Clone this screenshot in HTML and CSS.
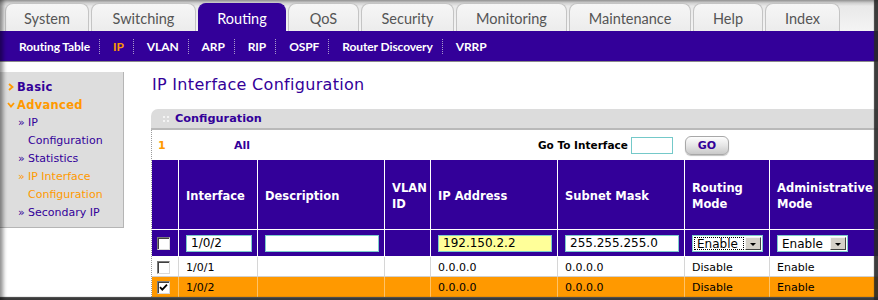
FILE: index.html
```html
<!DOCTYPE html>
<html>
<head>
<meta charset="utf-8">
<link rel="stylesheet" href="styles.css">
</head>
<body>
<div class="window">
  <div class="tabs">
    <div class="tab">System</div>
    <div class="tab">Switching</div>
    <div class="tab active">Routing</div>
    <div class="tab">QoS</div>
    <div class="tab">Security</div>
    <div class="tab">Monitoring</div>
    <div class="tab">Maintenance</div>
    <div class="tab">Help</div>
    <div class="tab">Index</div>
  </div>
  <div class="subnav">
    <span class="sn">Routing Table</span><span class="sep"></span>
    <span class="sn on">IP</span><span class="sep"></span>
    <span class="sn">VLAN</span><span class="sep"></span>
    <span class="sn">ARP</span><span class="sep"></span>
    <span class="sn">RIP</span><span class="sep"></span>
    <span class="sn">OSPF</span><span class="sep"></span>
    <span class="sn">Router Discovery</span><span class="sep"></span>
    <span class="sn">VRRP</span>
  </div>
  <div class="layout">
    <nav class="side">
      <div class="top-item"><span class="mk"><svg viewBox="0 0 6 8" width="6" height="8"><path d="M1 1 L4.5 4 L1 7" fill="none" stroke="#ff9900" stroke-width="1.8"/></svg></span>Basic</div>
      <div class="top-item open"><span class="mk"><svg viewBox="0 0 8 6" width="8" height="6"><path d="M1 1 L4 4.5 L7 1" fill="none" stroke="#ff9900" stroke-width="1.8"/></svg></span>Advanced</div>
      <div class="sub-item"><span class="mk2">&raquo;</span><span class="txt">IP Configuration</span></div>
      <div class="sub-item"><span class="mk2">&raquo;</span><span class="txt">Statistics</span></div>
      <div class="sub-item cur"><span class="mk2">&raquo;</span><span class="txt">IP Interface Configuration</span></div>
      <div class="sub-item"><span class="mk2">&raquo;</span><span class="txt">Secondary IP</span></div>
    </nav>
    <main class="content">
      <h1 class="title">IP Interface Configuration</h1>
      <section class="panel">
        <div class="panel-head"><span class="grip"><i></i><i></i><i></i><i></i></span>Configuration</div>
        <div class="panel-body">
          <div class="toolbar">
            <span class="page">1</span>
            <span class="all">All</span>
            <span class="goto">Go To Interface</span>
            <span class="goto-input"></span>
            <span class="go-btn">GO</span>
          </div>
          <table class="grid">
            <colgroup>
              <col class="c-chk"><col class="c-if"><col class="c-desc"><col class="c-vlan"><col class="c-ip"><col class="c-mask"><col class="c-rm"><col class="c-am">
            </colgroup>
            <thead>
              <tr>
                <th></th>
                <th>Interface</th>
                <th>Description</th>
                <th>VLAN<br>ID</th>
                <th>IP Address</th>
                <th>Subnet Mask</th>
                <th>Routing<br>Mode</th>
                <th>Administrative<br>Mode</th>
              </tr>
            </thead>
            <tbody>
              <tr class="edit">
                <td><span class="cb"></span></td>
                <td><span class="field f-if">1/0/2</span></td>
                <td><span class="field f-wide"></span></td>
                <td></td>
                <td><span class="field f-wide f-yellow">192.150.2.2</span></td>
                <td><span class="field f-wide">255.255.255.0</span></td>
                <td><span class="sel"><span class="sel-val focus">Enable</span><span class="sel-btn"></span></span></td>
                <td><span class="sel"><span class="sel-val">Enable</span><span class="sel-btn"></span></span></td>
              </tr>
              <tr class="row">
                <td><span class="cb"></span></td>
                <td>1/0/1</td>
                <td></td>
                <td></td>
                <td>0.0.0.0</td>
                <td>0.0.0.0</td>
                <td>Disable</td>
                <td>Enable</td>
              </tr>
              <tr class="row sel-row">
                <td><span class="cb checked"><svg viewBox="0 0 9 9" width="9" height="9"><path d="M1 4.2 L3.3 6.6 L8 1.6" fill="none" stroke="#000" stroke-width="1.8"/></svg></span></td>
                <td>1/0/2</td>
                <td></td>
                <td></td>
                <td>0.0.0.0</td>
                <td>0.0.0.0</td>
                <td>Disable</td>
                <td>Enable</td>
              </tr>
            </tbody>
          </table>
        </div>
      </section>
    </main>
  </div>
</div>
</body>
</html>
```
FILE: styles.css
```css
* { box-sizing: border-box; margin: 0; padding: 0; }
html, body { width: 878px; height: 300px; overflow: hidden; background: #fff; }
body { font-family: "DejaVu Sans", Verdana, sans-serif; font-size: 11px; color: #000; }

.window { position: relative; width: 878px; height: 300px; overflow: hidden; background: #fff; }
.window::after {
  content: ""; position: absolute; inset: 0; pointer-events: none;
  box-shadow:
    inset 5px 0 4px -2px rgba(0,0,0,.45),
    inset -5px 0 1px -1px rgba(40,40,40,.9),
    inset 0 -4px 1px -1px rgba(40,40,40,.9);
}

/* tabs */
.tabs {
  display: grid;
  grid-template-columns: 84px 105px 88px 71px 93px 111px 122px 70px 75px;
  column-gap: 2px;
  padding: 3px 0 0 5px;
  height: 31px;
  background: linear-gradient(#9c9c9c, #cfcfcf 3px, #e9e9e9 6px, #f4f4f4 31px);
}
.tab {
  border: 1px solid #c4c4c4; border-bottom: 0;
  border-radius: 8px 8px 0 0;
  background: linear-gradient(#f6f6f6, #ececec);
  color: #555;
  font: 14.5px "Lato", "DejaVu Sans", sans-serif;
  display: flex; align-items: center; justify-content: center;
  padding-top: 1px;
}
.tab.active { background: #330099; border-color: #330099; color: #fff; }

/* sub navigation */
.subnav {
  height: 31px;
  background: #330099;
  border-bottom: 1px solid #8a8a8a;
  display: flex; align-items: center;
  padding-left: 19px;
  font: bold 12px "Lato", "DejaVu Sans", sans-serif;
  letter-spacing: -0.1px;
  color: #fff;
}
.subnav .on { color: #ff9900; }
.sep { width: 0; height: 15px; border-left: 1px dotted #a99bcc; margin: 0 13px 0 9px; }

/* layout */
.layout { display: flex; align-items: flex-start; padding-top: 10px; }
.side {
  flex: none; width: 124px;
  background: #dddddd;
  border-right: 1px solid #b5b5b5;
  border-bottom: 1px solid #b5b5b5;
  padding: 6px 0 5px 0;
  line-height: 18px;
  color: #330099;
}
.top-item { font-weight: bold; font-size: 11.5px; padding-left: 7px; display: flex; align-items: center; letter-spacing: 0.3px; }
.top-item .mk { width: 10px; display: flex; align-items: center; padding-left: 1px; }
.top-item.open { color: #ff9900; }
.top-item.open .mk { padding-left: 0; }
.sub-item { display: flex; padding-left: 18px; }
.sub-item .mk2 { width: 10px; flex: none; }
.sub-item .txt { width: 82px; }
.sub-item.cur { color: #ff9900; }

.content { flex: none; margin-left: 27px; width: 730px; }
.title { font-size: 16px; letter-spacing: 0.3px; font-weight: normal; color: #330099; line-height: 18px; margin: 4px 0 15px 1px; }

.panel-head {
  height: 21px;
  background: #dcdcdc;
  border-bottom: 2px solid #b9b9b9;
  border-top-left-radius: 7px;
  display: flex; align-items: center;
  padding-left: 12px;
  font-weight: bold; font-size: 11.3px; color: #330099;
}
.grip { display: grid; grid-template-columns: 2px 2px; gap: 2px; margin-right: 6px; }
.grip i { width: 2px; height: 2px; background: #f4f4f4; display: block; }

.panel-body { border-left: 1px dotted #9a9a9a; }
.toolbar { height: 30px; display: flex; align-items: center; font-weight: bold; }
.page { width: 82px; padding-left: 6px; color: #ff9900; }
.all { width: 304px; color: #330099; }
.goto { color: #000; margin-right: 3px; font-size: 10.5px; }
.goto-input { width: 42px; height: 17px; border: 1px solid #74c9c9; margin-right: 12px; }
.go-btn {
  width: 44px; height: 19px;
  border: 1px solid #a8a8a8; border-radius: 6px;
  background: linear-gradient(#fdfdfd, #e6e6e6 50%, #c9c9c9);
  box-shadow: 0 1px 1px rgba(0,0,0,.25);
  color: #330099; font-weight: bold;
  display: flex; align-items: center; justify-content: center;
}

/* table */
.grid { border-collapse: separate; border-spacing: 0; table-layout: fixed; width: 728px; }
.c-chk { width: 27px; } .c-if { width: 79px; } .c-desc { width: 127px; } .c-vlan { width: 46px; }
.c-ip { width: 127px; } .c-mask { width: 127px; } .c-rm { width: 85px; } .c-am { width: 110px; }
.grid th, .grid td { border-right: 1px solid #fff; border-bottom: 1px solid #fff; text-align: left; padding: 0 0 0 7px; white-space: nowrap; }
.grid th { background: #330099; color: #fff; font-weight: bold; font-size: 11.5px; height: 70px; line-height: 16px; vertical-align: middle; padding-top: 3px; }
.grid th:first-child, .grid td:first-child { padding-left: 5px; }

.edit td { background: #330099; height: 27px; vertical-align: middle; }
.row td { height: 20px; background: #fff; border-right-color: #d6d6d6; border-bottom-color: #d0d0d0; padding-top: 1px; }
.row.sel-row td { background: #ff9900; border-right-color: #ffc266; border-bottom: 0; }

.cb {
  display: flex; align-items: center; justify-content: center;
  width: 13px; height: 13px; background: #fff;
  border: 1px solid; border-color: #7a7a7a #d8d8d8 #d8d8d8 #7a7a7a;
  box-shadow: inset 1px 1px #404040;
}
.field {
  display: block; height: 17px; line-height: 15px;
  border: 1px solid #7ccccc; background: #fff;
  padding-left: 4px; font-size: 12px; color: #000;
}
.f-if { width: 66px; }
.f-wide { width: 114px; }
.f-yellow { background: #ffff99; }

.sel {
  display: flex; width: 71px; height: 17px;
  border: 1px solid #7ccccc; background: #fff;
  font-size: 12px; line-height: 13px;
}
.sel-val { flex: 1; padding: 1px 0 0 3px; margin: 1px; }
.sel-val.focus { outline: 1px dotted #000; outline-offset: -1px; }
.sel-btn {
  width: 16px; margin: 1px 1px 1px 0;
  background: #d4d0c8;
  border: 1px solid; border-color: #f4f4f4 #404040 #404040 #f4f4f4;
  position: relative;
}
.sel-btn::after {
  content: ""; position: absolute; left: 4px; top: 5px;
  border-left: 3px solid transparent; border-right: 3px solid transparent; border-top: 3px solid #000;
}
```
